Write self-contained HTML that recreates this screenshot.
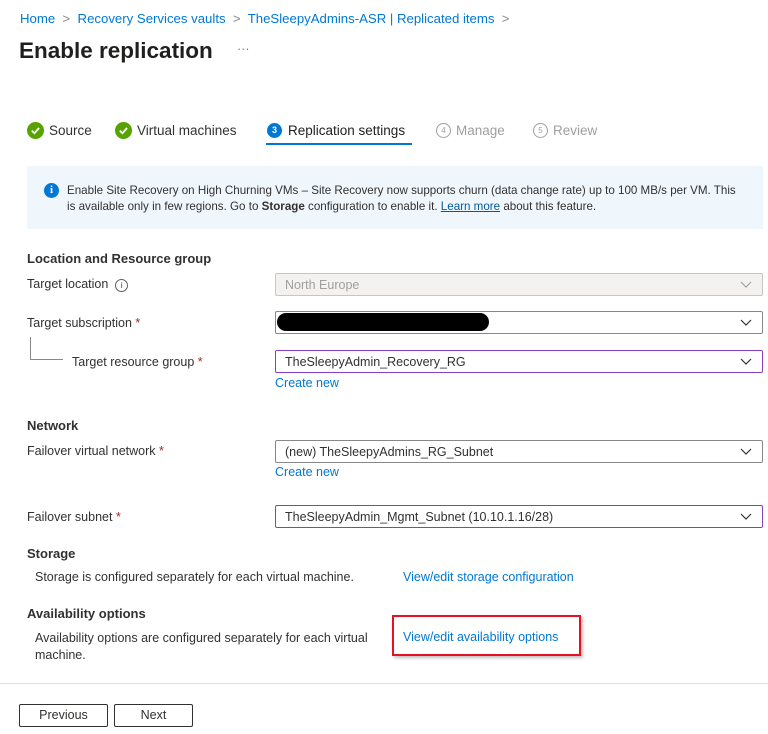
<!DOCTYPE html>
<html><head><style>
body{margin:0;width:768px;height:734px;background:#fff;font-family:"Liberation Sans",sans-serif;font-size:12.5px;color:#323130;position:relative;overflow:hidden}
.a{position:absolute;white-space:nowrap}
.l{color:#0078d4}
.b{font-weight:bold;font-size:13px}
.dd{position:absolute;left:275px;width:488px;height:23px;border:1px solid #8a8886;border-radius:2px;box-sizing:border-box}
.dd span{position:absolute;left:9px;top:4px}
.dd svg{position:absolute;right:10px;top:7px}
.p{border-color:#8a3fbf}
.r{color:#a4262c}
.btn{position:absolute;top:704px;height:23px;border:1px solid #323130;border-radius:2px;box-sizing:border-box;text-align:center;line-height:21px}
.tab{font-size:13.5px;display:flex;align-items:center;height:18px}
.ck{display:inline-block;width:17px;height:17px;border-radius:50%;background:#57a300;margin-right:5px;position:relative}
.ci{display:inline-block;width:15px;height:15px;border-radius:50%;border:1px solid #a19f9d;box-sizing:border-box;font-size:8px;text-align:center;line-height:13px;margin-right:5px;color:#a19f9d}
</style></head><body>
<div class="a l" style="left:20px;top:11px;font-size:13.2px">Home <span style="color:#888">&nbsp;&gt;&nbsp;</span> Recovery Services vaults <span style="color:#888">&nbsp;&gt;&nbsp;</span> TheSleepyAdmins-ASR | Replicated items <span style="color:#888">&nbsp;&gt;</span></div>
<div class="a" style="left:19px;top:38px;font-size:22.5px;font-weight:bold;color:#201f1e">Enable replication</div>
<div class="a" style="left:237px;top:42px;color:#777">···</div>

<div class="a tab" style="left:27px;top:121px"><span class="ck"><svg width="17" height="17"><path d="M4.8 8.6l2.6 2.6 4.7-5.2" stroke="#fff" stroke-width="1.8" fill="none"/></svg></span>Source</div>
<div class="a tab" style="left:115px;top:121px"><span class="ck"><svg width="17" height="17"><path d="M4.8 8.6l2.6 2.6 4.7-5.2" stroke="#fff" stroke-width="1.8" fill="none"/></svg></span>Virtual machines</div>
<div class="a tab" style="left:267px;top:121px;color:#201f1e"><span style="display:inline-block;width:15px;height:15px;border-radius:50%;background:#0078d4;color:#fff;font-size:9px;text-align:center;line-height:15px;margin-right:6px;font-weight:bold">3</span>Replication settings</div>
<div class="a" style="left:266px;top:143px;width:146px;height:2px;background:#0078d4"></div>
<div class="a tab" style="left:436px;top:121px;color:#a19f9d"><span class="ci">4</span>Manage</div>
<div class="a tab" style="left:533px;top:121px;color:#a19f9d"><span class="ci">5</span>Review</div>

<div class="a" style="left:27px;top:166px;width:736px;height:63px;background:#eff6fc"></div>
<div class="a" style="left:44px;top:183px;width:15px;height:15px;border-radius:50%;background:#0078d4;color:#fff;font-size:11px;font-weight:bold;text-align:center;line-height:15px;font-family:'Liberation Serif',serif">i</div>
<div class="a" style="left:67px;top:183px;font-size:11.6px;line-height:16px;color:#323130">Enable Site Recovery on High Churning VMs – Site Recovery now supports churn (data change rate) up to 100 MB/s per VM. This<br>is available only in few regions. Go to <b>Storage</b> configuration to enable it. <span style="color:#005a9e;text-decoration:underline">Learn more</span> about this feature.</div>

<div class="a b" style="left:27px;top:251px">Location and Resource group</div>
<div class="a" style="left:27px;top:277px">Target location &nbsp;<span style="display:inline-block;width:11px;height:11px;border:1px solid #605e5c;border-radius:50%;font-size:8px;text-align:center;line-height:11px;vertical-align:0">i</span></div>
<div class="dd" style="top:273px;background:#f3f2f1;border-color:#c8c6c4;color:#a19f9d"><span>North Europe</span><svg width="12" height="8"><path d="M1 1l5 5 5-5" stroke="#a19f9d" fill="none" stroke-width="1.2"/></svg></div>
<div class="a" style="left:27px;top:316px">Target subscription <span class="r">*</span></div>
<div class="dd" style="top:311px"><svg width="12" height="8"><path d="M1 1l5 5 5-5" stroke="#323130" fill="none" stroke-width="1.2"/></svg></div>
<div class="a" style="left:277px;top:313px;width:212px;height:18px;background:#000;border-radius:9px"></div>
<div class="a" style="left:30px;top:337px;width:32px;height:22px;border-left:1px solid #8a8886;border-bottom:1px solid #8a8886"></div>
<div class="a" style="left:72px;top:355px">Target resource group <span class="r">*</span></div>
<div class="dd p" style="top:350px"><span>TheSleepyAdmin_Recovery_RG</span><svg width="12" height="8"><path d="M1 1l5 5 5-5" stroke="#323130" fill="none" stroke-width="1.2"/></svg></div>
<div class="a l" style="left:275px;top:376px">Create new</div>

<div class="a b" style="left:27px;top:418px">Network</div>
<div class="a" style="left:27px;top:444px">Failover virtual network <span class="r">*</span></div>
<div class="dd" style="top:440px"><span>(new) TheSleepyAdmins_RG_Subnet</span><svg width="12" height="8"><path d="M1 1l5 5 5-5" stroke="#323130" fill="none" stroke-width="1.2"/></svg></div>
<div class="a l" style="left:275px;top:465px">Create new</div>
<div class="a" style="left:27px;top:510px">Failover subnet <span class="r">*</span></div>
<div class="dd p" style="top:505px"><span>TheSleepyAdmin_Mgmt_Subnet (10.10.1.16/28)</span><svg width="12" height="8"><path d="M1 1l5 5 5-5" stroke="#323130" fill="none" stroke-width="1.2"/></svg></div>

<div class="a b" style="left:27px;top:546px">Storage</div>
<div class="a" style="left:35px;top:570px">Storage is configured separately for each virtual machine.</div>
<div class="a l" style="left:403px;top:570px">View/edit storage configuration</div>
<div class="a b" style="left:27px;top:606px">Availability options</div>
<div class="a" style="left:35px;top:630px;line-height:17px">Availability options are configured separately for each virtual<br>machine.</div>
<div class="a" style="left:392px;top:615px;width:189px;height:41px;border:2px solid #e81123;box-sizing:border-box;box-shadow:2px 2px 3px rgba(0,0,0,.25)"></div>
<div class="a l" style="left:403px;top:630px">View/edit availability options</div>

<div class="a" style="left:0;top:683px;width:768px;height:1px;background:#e1dfdd"></div>
<div class="btn" style="left:19px;width:89px">Previous</div>
<div class="btn" style="left:114px;width:79px">Next</div>
</body></html>
